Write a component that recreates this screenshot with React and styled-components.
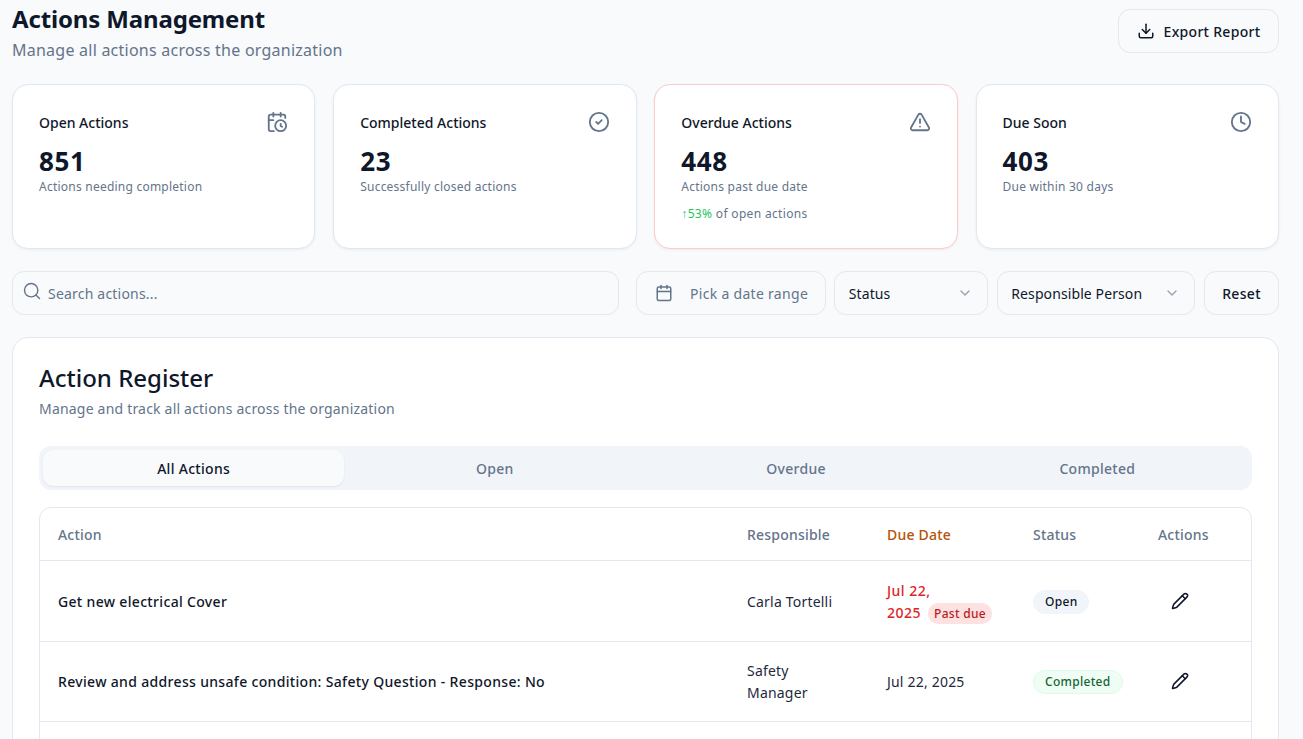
import React from "react";
import styled, { createGlobalStyle } from "styled-components";
import {
  CalendarClock,
  CircleCheck,
  TriangleAlert,
  Clock,
  Download,
  Search,
  Calendar,
  ChevronDown,
  Pencil,
} from "lucide-react";

const GlobalStyle = createGlobalStyle`
  html, body {
    margin: 0;
    height: 739px;
    overflow: hidden;
    background: #f8fafc;
    color: #0f172a;
    font-family: "Noto Sans", "Open Sans", sans-serif;
  }
  * { box-sizing: border-box; }
`;

const Page = styled.div`
  display: flex;
  flex-direction: column;
  padding: 4px 24px 0 12px;
`;

const Header = styled.header`
  display: flex;
  justify-content: space-between;
  align-items: flex-start;
  height: 80px;
`;

const Title = styled.h1`
  margin: 0;
  font-size: 24px;
  line-height: 30px;
  font-weight: 700;
  letter-spacing: -0.15px;
`;

const Subtitle = styled.p`
  margin: 0;
  font-size: 16px;
  line-height: 32px;
  letter-spacing: 0.24px;
  color: #64748b;
`;

const Button = styled.button`
  display: flex;
  align-items: center;
  justify-content: center;
  gap: 9px;
  height: 44px;
  padding: 0;
  border: 1px solid #e2e8f0;
  border-radius: 12px;
  background: #f8fafc;
  color: #0f172a;
  font: 500 14px "Noto Sans", sans-serif;
  letter-spacing: 0.3px;
`;

const ExportButton = styled(Button)`
  width: 161px;
  margin-top: 5px;
`;

const ResetButton = styled(Button)`
  width: 75px;
  flex: none;
  margin-left: auto;
`;

const Stats = styled.div`
  display: grid;
  grid-template-columns: repeat(4, 1fr);
  gap: 17.7px;
`;

const StatCard = styled.section`
  height: 165px;
  padding: 26px 26px 0;
  background: #fff;
  border: 1px solid ${(p) => (p.$alert ? "#fecaca" : "#e2e8f0")};
  border-radius: 16px;
  box-shadow: 0 1px 3px rgba(15, 23, 42, 0.06);
`;

const StatHead = styled.div`
  display: flex;
  justify-content: space-between;
  align-items: flex-start;
  height: 26px;
  color: #64748b;
`;

const StatLabel = styled.h3`
  margin: 0;
  font-size: 14px;
  line-height: 24px;
  font-weight: 500;
  color: #0f172a;
`;

const StatValue = styled.div`
  margin-top: 10px;
  font-size: 26px;
  line-height: 28px;
  font-weight: 700;
  letter-spacing: 0.6px;
`;

const StatNote = styled.div`
  margin-top: 1px;
  font-size: 12px;
  line-height: 22px;
  letter-spacing: 0.23px;
  color: #64748b;
`;

const StatTrend = styled(StatNote)`
  margin-top: 5px;
  letter-spacing: 0.33px;
`;

const Up = styled.span`
  color: #22c55e;
`;

const Filters = styled.div`
  display: flex;
  margin-top: 22px;
`;

const SearchBox = styled.div`
  display: flex;
  align-items: center;
  gap: 6px;
  flex: none;
  width: 607px;
  height: 44px;
  margin-right: 17px;
  padding: 0 9px;
  border: 1px solid #e2e8f0;
  border-radius: 12px;
  color: #64748b;
  font-size: 14px;
  letter-spacing: 0.2px;

  svg {
    margin-bottom: 4px;
    stroke-width: 1.7;
  }
`;

const Field = styled.div`
  display: flex;
  align-items: center;
  justify-content: space-between;
  flex: none;
  width: ${(p) => p.$width}px;
  height: 44px;
  margin-right: 8.7px;
  padding: 0 14px 0 13.5px;
  border: 1px solid #e2e8f0;
  border-radius: 12px;
  font-size: 14px;
  letter-spacing: 0.1px;
  white-space: nowrap;
  color: ${(p) => (p.$muted ? "#64748b" : "#0f172a")};

  svg {
    color: #64748b;
  }
`;

const DateField = styled(Field)`
  justify-content: flex-start;
  gap: 17px;
  padding: 0 0 0 18px;
  letter-spacing: 0.3px;
`;

const Chevron = styled(ChevronDown)`
  opacity: 0.65;
`;

const Register = styled.section`
  margin-top: 22px;
  padding: 24px 26px 0;
  background: #fff;
  border: 1px solid #e2e8f0;
  border-radius: 16px;
`;

const RegisterTitle = styled.h2`
  margin: 0;
  font-size: 24px;
  line-height: 32px;
  font-weight: 500;
`;

const RegisterNote = styled.p`
  margin: 5px 0 0;
  font-size: 14px;
  line-height: 20px;
  letter-spacing: 0.2px;
  color: #64748b;
`;

const Tabs = styled.div`
  display: grid;
  grid-template-columns: repeat(4, 1fr);
  height: 44px;
  margin-top: 27px;
  padding: 4px;
  background: #f1f5f9;
  border-radius: 12px;
`;

const Tab = styled.div`
  display: flex;
  align-items: center;
  justify-content: center;
  border-radius: 10px;
  font-size: 14px;
  font-weight: 500;
  letter-spacing: 0.3px;
  color: ${(p) => (p.$active ? "#0f172a" : "#64748b")};
  background: ${(p) => (p.$active ? "#f8fafc" : "transparent")};
  box-shadow: ${(p) => (p.$active ? "0 1px 2px rgba(15, 23, 42, 0.08)" : "none")};
`;

const TableWrap = styled.div`
  margin-top: 17px;
  border: 1px solid #e2e8f0;
  border-radius: 12px;
  overflow: hidden;
`;

const Table = styled.table`
  width: 100%;
  border-collapse: collapse;
  table-layout: fixed;
  font-size: 14px;
  letter-spacing: 0.2px;
`;

const Th = styled.th`
  width: ${(p) => p.$width || "auto"};
  height: 52px;
  padding: 2px 18px 0;
  text-align: left;
  font-weight: 500;
  color: ${(p) => (p.$sorted ? "#b45309" : "#64748b")};
  border-bottom: 1px solid #e2e8f0;
`;

const Row = styled.tr`
  height: ${(p) => p.$height}px;
  border-bottom: 1px solid #e2e8f0;
`;

const Td = styled.td`
  padding: 2px 18px 0;
  line-height: 22px;
  color: #1e293b;
`;

const ActionName = styled(Td)`
  font-weight: 500;
  letter-spacing: 0.33px;
  color: #0f172a;
`;

const Overdue = styled.span`
  font-weight: 500;
  letter-spacing: 0.5px;
  color: #dc2626;
`;

const PastDue = styled.span`
  display: inline-block;
  margin-left: 7px;
  padding: 0 6px;
  font-size: 12px;
  line-height: 21px;
  font-weight: 500;
  letter-spacing: 0.3px;
  color: #b91c1c;
  background: #fee2e2;
  border-radius: 10px;
`;

const Badge = styled.span`
  display: inline-block;
  padding: 0 11px;
  font-size: 12px;
  line-height: 22px;
  font-weight: 500;
  letter-spacing: 0.3px;
  border-radius: 12px;
  color: ${(p) => (p.$done ? "#166534" : "#0f172a")};
  background: ${(p) => (p.$done ? "#f0fdf4" : "#f1f5f9")};
  border: 1px solid ${(p) => (p.$done ? "#dcfce7" : "#f1f5f9")};
`;

const EditCell = styled(Td)`
  padding: 0 18px 0 31px;
  color: #0f172a;

  svg {
    display: block;
  }
`;

const stats = [
  { label: "Open Actions", value: "851", note: "Actions needing completion", Icon: CalendarClock },
  { label: "Completed Actions", value: "23", note: "Successfully closed actions", Icon: CircleCheck },
  { label: "Overdue Actions", value: "448", note: "Actions past due date", Icon: TriangleAlert, alert: true },
  { label: "Due Soon", value: "403", note: "Due within 30 days", Icon: Clock },
];

export default function App() {
  return (
    <>
      <GlobalStyle />
      <Page>
        <Header>
          <div>
            <Title>Actions Management</Title>
            <Subtitle>Manage all actions across the organization</Subtitle>
          </div>
          <ExportButton>
            <Download size={18} />
            Export Report
          </ExportButton>
        </Header>

        <Stats>
          {stats.map(({ label, value, note, Icon, alert }) => (
            <StatCard key={label} $alert={alert}>
              <StatHead>
                <StatLabel>{label}</StatLabel>
                <Icon size={22} />
              </StatHead>
              <StatValue>{value}</StatValue>
              <StatNote>{note}</StatNote>
              {alert && (
                <StatTrend>
                  <Up>↑53%</Up> of open actions
                </StatTrend>
              )}
            </StatCard>
          ))}
        </Stats>

        <Filters>
          <SearchBox>
            <Search size={20} />
            Search actions...
          </SearchBox>
          <DateField $width={189.6} $muted>
            <Calendar size={18} />
            Pick a date range
          </DateField>
          <Field $width={153.8}>
            Status
            <Chevron size={16} />
          </Field>
          <Field $width={198}>
            Responsible Person
            <Chevron size={16} />
          </Field>
          <ResetButton>Reset</ResetButton>
        </Filters>

        <Register>
          <RegisterTitle>Action Register</RegisterTitle>
          <RegisterNote>Manage and track all actions across the organization</RegisterNote>

          <Tabs>
            <Tab $active>All Actions</Tab>
            <Tab>Open</Tab>
            <Tab>Overdue</Tab>
            <Tab>Completed</Tab>
          </Tabs>

          <TableWrap>
            <Table>
              <thead>
                <tr>
                  <Th>Action</Th>
                  <Th $width="140px">Responsible</Th>
                  <Th $width="146px" $sorted>Due Date</Th>
                  <Th $width="125px">Status</Th>
                  <Th $width="111px">Actions</Th>
                </tr>
              </thead>
              <tbody>
                <Row $height={81}>
                  <ActionName>Get new electrical Cover</ActionName>
                  <Td>Carla Tortelli</Td>
                  <Td>
                    <Overdue>Jul 22,<br />2025</Overdue>
                    <PastDue>Past due</PastDue>
                  </Td>
                  <Td><Badge>Open</Badge></Td>
                  <EditCell><Pencil size={18} /></EditCell>
                </Row>
                <Row $height={80}>
                  <ActionName>Review and address unsafe condition: Safety Question - Response: No</ActionName>
                  <Td>Safety Manager</Td>
                  <Td>Jul 22, 2025</Td>
                  <Td><Badge $done>Completed</Badge></Td>
                  <EditCell><Pencil size={18} /></EditCell>
                </Row>
                <Row $height={80} aria-hidden="true">
                  <Td colSpan={5} />
                </Row>
              </tbody>
            </Table>
          </TableWrap>
        </Register>
      </Page>
    </>
  );
}
